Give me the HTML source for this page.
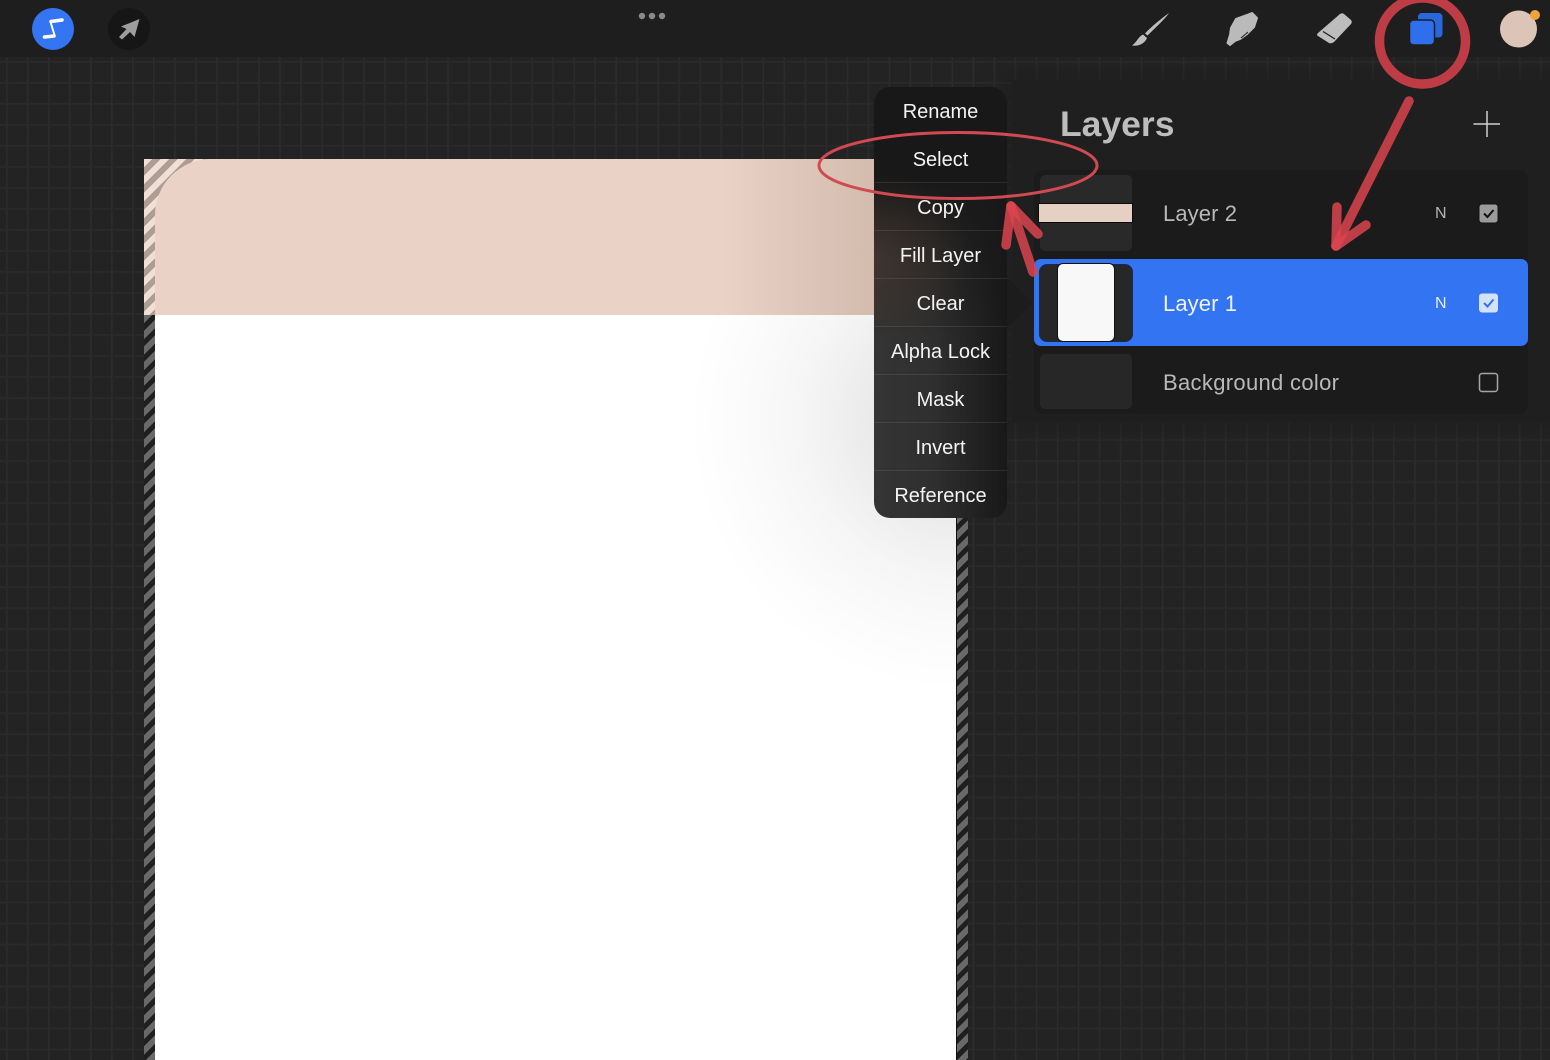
<!DOCTYPE html>
<html><head><meta charset="utf-8">
<style>
html,body{margin:0;padding:0;background:#222}
#r{position:relative;width:1550px;height:1060px;overflow:hidden;background-color:#232323;font-family:"Liberation Sans",sans-serif;
background-image:linear-gradient(to right,#2c2c2c 0,#2c2c2c 1px,#232323 2.2px,transparent 2.2px),linear-gradient(to bottom,#2b2b2b 0,#2b2b2b 1px,#232323 2.2px,transparent 2.2px);
background-size:21.03px 21.03px;background-position:6px 61px}
.a{position:absolute}
.m{position:absolute;left:0;width:133px;height:48px;line-height:50px;text-align:center;color:#f4f4f4;font-size:20px;box-sizing:border-box}
.l{position:absolute;left:0;width:133px;height:1px;background:rgba(255,255,255,.09)}
.t{position:absolute;font-size:22px;line-height:28px;color:#b9b9b9;letter-spacing:.1px}
.n{position:absolute;left:1435px;font-size:16px;line-height:20px;color:#b4b4b4}
</style></head>
<body><div id="r">
<!-- stripes left / right -->
<div class="a" style="left:144px;top:315px;width:11px;height:745px;background:repeating-linear-gradient(135deg,#696969 0 6px,#1f1f1f 6px 11px)"></div>
<div class="a" style="left:957px;top:500px;width:11px;height:560px;background:repeating-linear-gradient(135deg,#696969 0 6px,#1f1f1f 6px 11px)"></div>
<!-- canvas -->
<div class="a" style="left:155px;top:315px;width:801px;height:745px;background:#fff;border-right:1px solid #111"></div>
<div class="a" style="left:155px;top:315px;width:801px;height:500px;background:radial-gradient(circle 272px at 805px 105px,rgba(0,0,0,.12) 0,rgba(0,0,0,.08) 35%,rgba(0,0,0,.035) 60%,rgba(0,0,0,.01) 85%,transparent 100%)"></div>
<div class="a" style="left:144px;top:159px;width:740px;height:156px;background:repeating-linear-gradient(135deg,#f0dfd5 0 6px,#ad9d94 6px 12px)"></div>
<div class="a" style="left:155px;top:159px;width:730px;height:156px;background:#ead3c6;border-radius:56px 0 0 0"></div>
<div class="a" style="left:720px;top:159px;width:155px;height:156px;background:linear-gradient(to right,rgba(90,60,45,0),rgba(90,60,45,.16))"></div>
<!-- layers panel bg -->
<div class="a" style="left:1012px;top:80px;width:538px;height:342px;background:#1f1f1f;box-shadow:0 0 20px 8px rgba(31,31,31,.8)"></div>
<!-- top bar -->
<div class="a" style="left:0;top:0;width:1550px;height:57px;background:#1e1e1e"></div>
<div class="a" style="left:32px;top:8px;width:42px;height:42px;border-radius:50%;background:#3375f2"></div>
<svg class="a" style="left:0;top:0" width="1550" height="60">
<path d="M51 21.500L62 20M44.500 37L54 36" stroke="#fff" stroke-width="3.600" stroke-linecap="round" fill="none"/>
<path d="M50.500 22L54.500 35" stroke="#fff" stroke-width="2" stroke-linecap="round" fill="none"/>
<circle cx="129" cy="29" r="21" fill="#161616"/>
<path d="M139.500 19L134.500 37L130 32L122 39.500L119 37L126.500 29L121 26.500Z" fill="#9d9d9d"/>
<circle cx="642" cy="16" r="3.200" fill="#8a8a8a"/><circle cx="652" cy="16" r="3.200" fill="#8a8a8a"/><circle cx="662" cy="16" r="3.200" fill="#8a8a8a"/>
<!-- brush -->
<path d="M1169 13C1165 19 1156 27 1147.500 35.500L1145 33.500C1152 26 1162 18 1169 13ZM1143 34.500L1147 38C1144.500 44 1138 46.500 1132 45.500C1137 42 1138 37 1143 34.500Z" fill="#bdbdbd"/>
<!-- smudge -->
<path d="M1252 13L1257 18L1254 27L1247 34L1240 39L1235 41L1230 45L1227.500 43L1230 35L1231 28L1236 19L1247 15Z" fill="#bababa" stroke="#bababa" stroke-width="2" stroke-linejoin="round"/>
<path d="M1241 38L1248 32" stroke="#1e1e1e" stroke-width="1"/>
<!-- eraser -->
<path d="M1340 14Q1342 12.500 1344 14L1351 20Q1352.500 22 1351 24L1334 42Q1331 44 1329 43L1318 36Q1316 35 1318 33Z" fill="#bdbdbd"/>
<path d="M1323 31.500L1335 39" stroke="#1e1e1e" stroke-width="1.300"/>
<!-- layers -->
<rect x="1418" y="13" width="24.500" height="24.500" rx="4" fill="#2a67de"/>
<rect x="1409.500" y="20" width="25" height="25" rx="4" fill="#2f6fec" stroke="#1e1e1e" stroke-width="1.500"/>
<!-- colour -->
<circle cx="1518.500" cy="29" r="18.500" fill="#dcc4b6"/>
<circle cx="1535" cy="15" r="5" fill="#f0a23b"/>
</svg>
<!-- Layers header -->
<div class="a" style="left:1060px;top:103px;font-size:35.500px;line-height:42px;font-weight:bold;color:#bdbdbd">Layers</div>
<svg class="a" style="left:1470px;top:108px" width="34" height="32"><path d="M3.500 16H30M17 3V29" stroke="#d0d0d0" stroke-width="1.500"/></svg>
<!-- rows -->
<div class="a" style="left:1034px;top:170px;width:494px;height:244px;border-radius:9px;background:#1b1b1b"></div>
<div class="a" style="left:1040px;top:175px;width:92px;height:76px;border-radius:5px;background:#292929"></div>
<div class="a" style="left:1039px;top:204px;width:93px;height:18px;background:#e6d0c4;box-shadow:0 0 0 1px #0b0b0b"></div>
<div class="a" style="left:1034px;top:259px;width:494px;height:87px;border-radius:7px;background:#3374f2"></div>
<div class="a" style="left:1040px;top:265px;width:92px;height:76px;border-radius:7px;background:#272727;box-shadow:0 0 0 1px #172a52"></div>
<div class="a" style="left:1058px;top:264px;width:56px;height:77px;border-radius:5px;background:#f8f8f8;box-shadow:0 0 0 1px #111"></div>
<div class="a" style="left:1040px;top:354px;width:92px;height:55px;border-radius:5px;background:#272727"></div>
<div class="t" style="left:1163px;top:200px">Layer 2</div>
<div class="t" style="left:1163px;top:290px;color:#eef3ff">Layer 1</div>
<div class="t" style="left:1163px;top:369px;letter-spacing:.32px">Background color</div>
<div class="n" style="top:204px">N</div>
<div class="n" style="top:294px;color:#e4edff">N</div>
<svg class="a" style="left:1476px;top:200px" width="26" height="195">
<rect x="3" y="4" width="19" height="19" rx="3" fill="#9b9b9b" stroke="#141414"/>
<path d="M8 13.500L11.500 17L17.500 10" stroke="#111" stroke-width="2" fill="none"/>
<rect x="3" y="93.500" width="19" height="19" rx="3" fill="#d2e2ff"/>
<path d="M8 103L11.500 106.500L17.500 99.500" stroke="#3374f2" stroke-width="2" fill="none"/>
<rect x="3.500" y="173.500" width="18" height="18" rx="2.500" fill="none" stroke="#a5a5a5" stroke-width="1.500"/>
</svg>
<!-- popover -->
<svg class="a" style="left:1000px;top:270px" width="36" height="66"><path d="M7 8L33 33L7 58Z" fill="#1c1c1c"/></svg>
<div class="a" style="left:874px;top:87px;width:133px;height:431px;border-radius:16px;overflow:hidden;background:linear-gradient(to right,#343434,#2f2f2f 45%,#181818);">
<div class="a" style="left:0;top:0;width:133px;height:250px;background:linear-gradient(to bottom,#181818 0,#181818 36%,rgba(24,24,24,0) 100%)"></div>
<div class="a" style="left:0;top:90px;width:133px;height:150px;background:radial-gradient(ellipse 100px 85px at 0 80px,rgba(100,75,60,.38),rgba(100,75,60,0))"></div>
<div class="m" style="top:0">Rename</div>
<div class="m" style="top:48px">Select</div><div class="l" style="top:95px"></div>
<div class="m" style="top:96px">Copy</div><div class="l" style="top:143px"></div>
<div class="m" style="top:144px">Fill Layer</div><div class="l" style="top:191px"></div>
<div class="m" style="top:192px">Clear</div><div class="l" style="top:239px"></div>
<div class="m" style="top:240px">Alpha Lock</div><div class="l" style="top:287px"></div>
<div class="m" style="top:288px">Mask</div><div class="l" style="top:335px"></div>
<div class="m" style="top:336px">Invert</div><div class="l" style="top:383px"></div>
<div class="m" style="top:384px">Reference</div>
</div>
<!-- annotations -->
<svg class="a" style="left:0;top:0" width="1550" height="300" fill="none" stroke-linecap="round">
<circle cx="1422.500" cy="41" r="43" stroke="#bd3c46" stroke-width="9.500"/>
<ellipse cx="958" cy="165.500" rx="139" ry="33" stroke="#d14a52" stroke-width="3"/>
<g stroke="#d9444f" stroke-opacity=".85" stroke-width="9.500">
<path d="M1409 101L1336 246"/><path d="M1336 246L1337 207"/><path d="M1336 246L1366 225"/>
<path d="M1033 272L1011 206"/><path d="M1011 206L1006 245"/><path d="M1011 206L1038 234"/>
</g>
</svg>
</div></body></html>
